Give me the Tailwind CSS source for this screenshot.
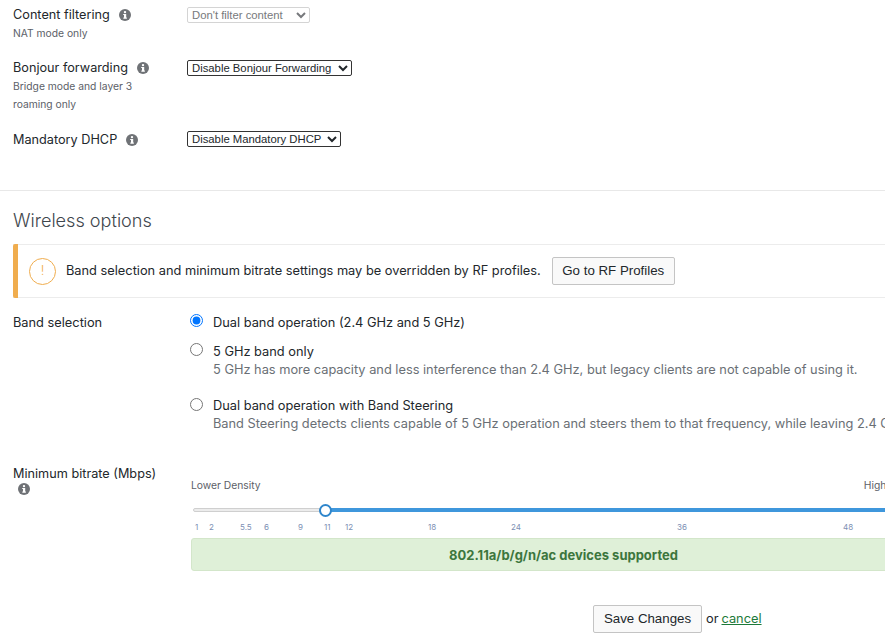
<!DOCTYPE html>
<html lang="en">
<head>
  <meta charset="UTF-8" />
  <title>Wireless options</title>
  <script src="https://cdn.jsdelivr.net/npm/@tailwindcss/browser@4"></script>
</head>
<body class="bg-white overflow-hidden h-[638px] font-['Inter','Liberation_Sans',sans-serif] text-[#22272b]">
  <main class="w-[1100px] h-[638px] overflow-hidden">
    <!-- top form rows -->
    <section class="pl-[13px] pt-[7px] h-[183px] border-b border-[#e8e8e8] box-content">
      <div class="flex h-[53px]">
        <div class="w-[174px]">
          <div class="flex items-center h-[16px] text-[12.7px]">Content filtering
            <svg class="ml-[9px] w-[12px] h-[12px]" viewBox="0 0 12 12"><circle cx="6" cy="6" r="6" fill="#6f7276"/><rect x="5" y="5" width="2.2" height="4.4" fill="#fff"/><rect x="4.2" y="8.6" width="3.8" height="1" fill="#fff"/><rect x="4.2" y="5" width="2" height="1" fill="#fff"/><circle cx="6" cy="3.1" r="1.2" fill="#fff"/></svg>
          </div>
          <div class="text-[10.3px] text-[#5c6168] leading-[18px] mt-[1px]">NAT mode only</div>
        </div>
        <select disabled class="appearance-auto h-[16px] w-[123px] border border-[#d4d4d4] rounded-[2px] font-['Liberation_Sans',sans-serif] text-[11.3px] text-[#77797c] bg-white">
          <option>Don't filter content</option>
        </select>
      </div>
      <div class="flex h-[71px]">
        <div class="w-[174px]">
          <div class="flex items-center h-[16px] text-[12.7px]">Bonjour forwarding
            <svg class="ml-[9px] w-[12px] h-[12px]" viewBox="0 0 12 12"><circle cx="6" cy="6" r="6" fill="#6f7276"/><rect x="5" y="5" width="2.2" height="4.4" fill="#fff"/><rect x="4.2" y="8.6" width="3.8" height="1" fill="#fff"/><rect x="4.2" y="5" width="2" height="1" fill="#fff"/><circle cx="6" cy="3.1" r="1.2" fill="#fff"/></svg>
          </div>
          <div class="text-[10.3px] text-[#5c6168] leading-[18px] mt-[1px]">Bridge mode and layer 3<br />roaming only</div>
        </div>
        <select class="appearance-auto h-[16px] w-[165px] border border-[#333] rounded-[2px] font-['Liberation_Sans',sans-serif] text-[11.3px] text-[#22272b] bg-white">
          <option>Disable Bonjour Forwarding</option>
        </select>
      </div>
      <div class="flex">
        <div class="w-[174px]">
          <div class="flex items-center h-[17px] text-[12.7px]">Mandatory DHCP
            <svg class="ml-[9px] w-[12px] h-[12px]" viewBox="0 0 12 12"><circle cx="6" cy="6" r="6" fill="#6f7276"/><rect x="5" y="5" width="2.2" height="4.4" fill="#fff"/><rect x="4.2" y="8.6" width="3.8" height="1" fill="#fff"/><rect x="4.2" y="5" width="2" height="1" fill="#fff"/><circle cx="6" cy="3.1" r="1.2" fill="#fff"/></svg>
          </div>
        </div>
        <select class="appearance-auto h-[16px] w-[154px] border border-[#333] rounded-[2px] font-['Liberation_Sans',sans-serif] text-[11.3px] text-[#22272b] bg-white">
          <option>Disable Mandatory DHCP</option>
        </select>
      </div>
    </section>

    <h2 class="ml-[13px] mt-[18px] h-[22px] leading-[22px] text-[18.1px] font-light text-[#3f474d]">Wireless options</h2>

    <!-- notice -->
    <div class="ml-[13px] mt-[13px] h-[54px] flex items-center border-y border-[#ececec] relative">
      <div class="absolute left-0 top-[-1px] bottom-[-1px] w-[5px] bg-[#f0ad4e] rounded-l-[2px]"></div>
      <div class="ml-[16px] w-[27px] h-[27px] rounded-full border border-[#f0ad4e] flex items-center justify-center text-[#f0ad4e] text-[13px] font-light">!</div>
      <span class="ml-[10px] text-[12.8px]">Band selection and minimum bitrate settings may be overridden by RF profiles.</span>
      <button class="ml-[11px] w-[123px] h-[28px] border border-[#c4c4c4] rounded-[2px] bg-[#f9f9f9] font-['Liberation_Sans',sans-serif] text-[13.3px]">Go to RF Profiles</button>
    </div>

    <!-- band selection -->
    <div class="ml-[13px] mt-[16px] flex h-[136px]">
      <div class="w-[177px] text-[12.8px] leading-[18px]">Band selection</div>
      <div class="text-[12.8px]">
        <label class="flex h-[18px] items-center">
          <input type="radio" name="band" checked class="w-[13px] h-[13px] mb-[6px] accent-[#0075ff]" />
          <span class="ml-[10px]">Dual band operation (2.4 GHz and 5 GHz)</span>
        </label>
        <label class="flex h-[18px] items-center mt-[11px]">
          <input type="radio" name="band" class="w-[13px] h-[13px] mb-[6px]" />
          <span class="ml-[10px]">5 GHz band only</span>
        </label>
        <p class="ml-[23px] text-[#6a6f75] leading-[18px] whitespace-nowrap">5 GHz has more capacity and less interference than 2.4 GHz, but legacy clients are not capable of using it.</p>
        <label class="flex h-[18px] items-center mt-[18px]">
          <input type="radio" name="band" class="w-[13px] h-[13px] mb-[4px]" />
          <span class="ml-[10px]">Dual band operation with Band Steering</span>
        </label>
        <p class="ml-[23px] text-[#6a6f75] leading-[18px] whitespace-nowrap">Band Steering detects clients capable of 5 GHz operation and steers them to that frequency, while leaving 2.4 GHz available for older clients.</p>
      </div>
    </div>

    <!-- minimum bitrate -->
    <div class="ml-[13px] flex">
      <div class="w-[178px] text-[12.7px] leading-[18px] mt-[15px]">
        <div>Minimum bitrate (Mbps)</div>
        <svg class="ml-[5px] w-[12px] h-[12px]" viewBox="0 0 12 12"><circle cx="6" cy="6" r="6" fill="#6f7276"/><rect x="5" y="5" width="2.2" height="4.4" fill="#fff"/><rect x="4.2" y="8.6" width="3.8" height="1" fill="#fff"/><rect x="4.2" y="5" width="2" height="1" fill="#fff"/><circle cx="6" cy="3.1" r="1.2" fill="#fff"/></svg>
      </div>
      <div class="w-[900px]">
        <div class="flex justify-between w-[745px] text-[10.3px] text-[#5c6168] leading-[14px] mt-[28px]">
          <span>Lower Density</span><span>Higher Density</span>
        </div>
        <div class="relative h-[46px]">
          <div class="absolute left-[2px] top-[16px] w-[130px] h-[4px] bg-[#ececec] border border-[#cfcfcf] rounded-full"></div>
          <div class="absolute left-[134px] top-[16px] w-[800px] h-[4px] bg-[#3f97dc]"></div>
          <div class="absolute left-[128px] top-[12px] w-[13px] h-[13px] bg-white border-2 border-[#2f86cc] rounded-full"></div>
          <div class="text-[8px] leading-[10px] text-[#7c8fb4]">
            <span class="absolute top-[30px] left-[4px]">1</span>
            <span class="absolute top-[30px] left-[18px]">2</span>
            <span class="absolute top-[30px] left-[49px]">5.5</span>
            <span class="absolute top-[30px] left-[73px]">6</span>
            <span class="absolute top-[30px] left-[107px]">9</span>
            <span class="absolute top-[30px] left-[133px]">11</span>
            <span class="absolute top-[30px] left-[154px]">12</span>
            <span class="absolute top-[30px] left-[237px]">18</span>
            <span class="absolute top-[30px] left-[320px]">24</span>
            <span class="absolute top-[30px] left-[486px]">36</span>
            <span class="absolute top-[30px] left-[652px]">48</span>
          </div>
        </div>
        <div class="w-[745px] h-[33px] pt-[2px] bg-[#dff0d8] border border-[#d3e6ca] rounded-[3px] flex items-center justify-center text-[13px] font-bold text-[#3c763d]">802.11a/b/g/n/ac devices supported</div>
      </div>
    </div>

    <!-- footer -->
    <div class="ml-[593px] mt-[34px] flex items-center text-[12.8px]">
      <button class="w-[109px] h-[28px] border border-[#c4c4c4] rounded-[2px] bg-[#f9f9f9] font-['Liberation_Sans',sans-serif] text-[13.3px]">Save Changes</button>
      <span class="ml-[4px]">or</span>
      <a href="#" class="ml-[3px] text-[#1d7a3a] underline">cancel</a>
    </div>
  </main>
</body>
</html>
